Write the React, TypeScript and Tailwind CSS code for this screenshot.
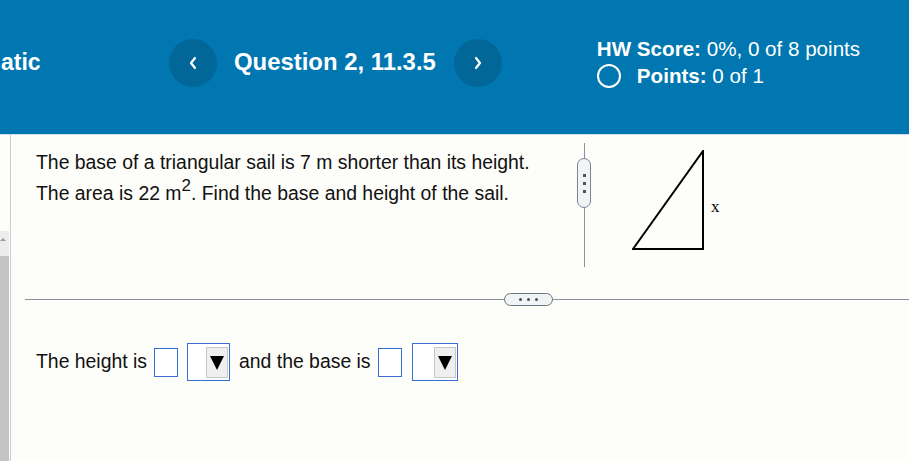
import React from "react";

function Dot() {
  return <div className="w-[3px] h-[3px] bg-[#4a5566]" />;
}

function Arrow() {
  return (
    <div className="w-[22px] h-[31px] bg-[#efefef] border border-[#c6c6c6] flex items-center justify-center">
      <svg width="14" height="15" viewBox="0 0 14 15">
        <polygon points="0,1 14,1 7,15" fill="black" />
      </svg>
    </div>
  );
}

export default function App() {
  return (
    <div className="w-[909px] h-[461px] overflow-hidden bg-[#fdfdf9] font-['Liberation_Sans',Arial,sans-serif] flex flex-col">
      {/* Header */}
      <div className="h-[135px] shrink-0 bg-[#0077b1] border-b border-[#cfdbe6] flex items-start text-white overflow-hidden">
        <div className="w-[169px] shrink-0 pt-[47px] pl-[1px] text-[23px] font-bold leading-[30px]">
          atic
        </div>
        <div className="mt-[39px] w-[48px] h-[48px] rounded-full bg-[#006798] flex items-center justify-center shrink-0">
          <svg width="10" height="14" viewBox="0 0 10 14">
            <path d="M7 2 L3 7 L7 12" fill="none" stroke="white" strokeWidth="2.2" strokeLinecap="round" strokeLinejoin="round" />
          </svg>
        </div>
        <div className="ml-[17px] mt-[47px] text-[23.9px] font-bold leading-[30px] whitespace-nowrap">
          Question 2, 11.3.5
        </div>
        <div className="ml-[18px] mt-[39px] w-[48px] h-[48px] rounded-full bg-[#006798] flex items-center justify-center shrink-0">
          <svg width="10" height="14" viewBox="0 0 10 14">
            <path d="M3 2 L7 7 L3 12" fill="none" stroke="white" strokeWidth="2.2" strokeLinecap="round" strokeLinejoin="round" />
          </svg>
        </div>
        <div className="ml-[95px] mt-[35px] flex flex-col text-[20.6px] leading-[27px] whitespace-nowrap">
          <div>
            <span className="font-bold">HW Score:</span> 0%, 0 of 8 points
          </div>
          <div className="flex items-center">
            <div className="w-[24px] h-[24px] rounded-full border-[2.5px] border-white shrink-0" />
            <div className="ml-[16px]">
              <span className="font-bold">Points:</span> 0 of 1
            </div>
          </div>
        </div>
      </div>

      {/* Body */}
      <div className="flex flex-1 min-h-0">
        <div className="w-[10px] shrink-0 flex flex-col">
          <div className="h-[96px]" />
          <div className="h-[25px] w-[9px] bg-[#ececec] relative">
            <div className="absolute left-0 top-[7px] w-0 h-0 border-l-[3px] border-r-[3px] border-b-[3px] border-l-transparent border-r-transparent border-b-[#9a9a9a]" />
          </div>
          <div className="flex-1 w-[9px] bg-[#c3c3c3]" />
        </div>
        <div className="w-px shrink-0 bg-[#c5cfdc]" />

        <div className="flex-1 flex flex-col text-[#111]">
          {/* Top section */}
          <div className="h-[164px] flex shrink-0">
            <div className="w-[573px] shrink-0 pl-[25px] pt-[12px] text-[19.4px] leading-[31px]">
              <div>The base of a triangular sail is 7 m shorter than its height.</div>
              <div>
                The area is 22 m
                <span className="relative -top-[9px] text-[17px]">2</span>. Find the base and height of the sail.
              </div>
            </div>
            <div className="relative w-px shrink-0 mt-[8px] h-[124px] bg-[#8a94a0]">
              <div className="absolute left-[-7px] top-[15px] w-[14px] h-[50px] rounded-full bg-[#f1f3f5] border border-[#7a8593] flex flex-col items-center justify-center gap-[5px]">
                <Dot />
                <Dot />
                <Dot />
              </div>
            </div>
            <div className="pl-[47px] pt-[15px]">
              <svg width="100" height="102" viewBox="0 0 100 102">
                <polygon points="1,99 71,1 71,99" fill="none" stroke="black" strokeWidth="2" />
                <text x="79" y="62" fontFamily="'Liberation Serif', 'Times New Roman', serif" fontSize="17" fill="black">x</text>
              </svg>
            </div>
          </div>

          {/* Horizontal divider */}
          <div className="relative ml-[14px] h-px bg-[#8a94a0] shrink-0">
            <div className="absolute left-[479px] top-[-6px] w-[49px] h-[13px] rounded-full bg-[#f1f3f5] border border-[#6b7685] flex items-center justify-center gap-[5px]">
              <div className="w-[3px] h-[3px] rounded-full bg-[#4a5060]" />
              <div className="w-[3px] h-[3px] rounded-full bg-[#4a5060]" />
              <div className="w-[3px] h-[3px] rounded-full bg-[#4a5060]" />
            </div>
          </div>

          {/* Answer row */}
          <div className="pl-[25px] pt-[43px] flex items-center h-[81px] text-[19.4px] whitespace-nowrap">
            <span>The height is</span>
            <div className="ml-[7px] w-[24px] h-[29px] border border-[#3a6fd8] bg-white" />
            <div className="ml-[9px] w-[43px] h-[38px] border border-[#3a6fd8] bg-white flex items-center justify-end pr-[1px]">
              <Arrow />
            </div>
            <span className="ml-[9px]">and the base is</span>
            <div className="ml-[7px] w-[24px] h-[29px] border border-[#3a6fd8] bg-white" />
            <div className="ml-[10px] w-[46px] h-[38px] border border-[#3a6fd8] bg-white flex items-center justify-end pr-[1px]">
              <Arrow />
            </div>
          </div>
        </div>
      </div>
    </div>
  );
}
